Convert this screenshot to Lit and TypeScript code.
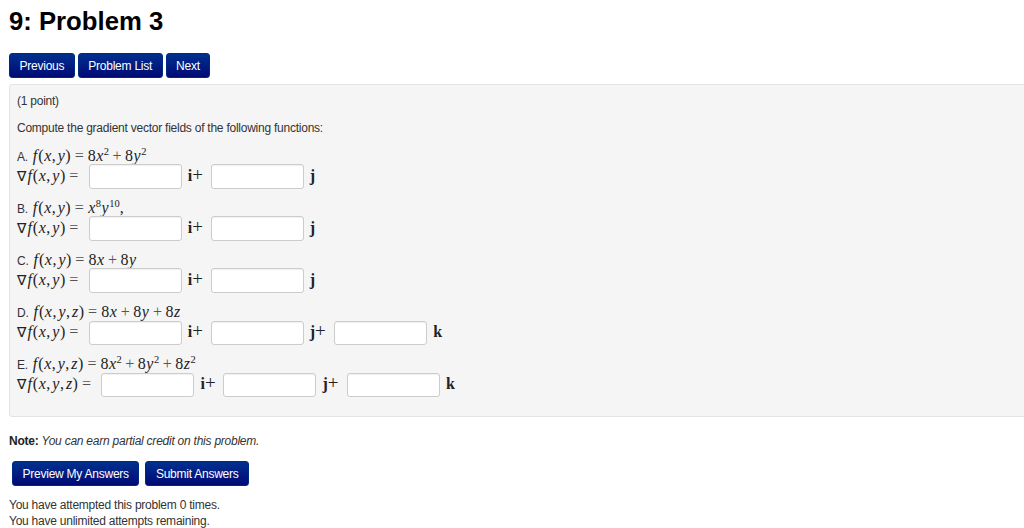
import { LitElement, html, css } from "lit";
import { customElement } from "lit/decorators.js";

const v = (s: string) => html`<i class="var">${s}</i>`;
const sep = html`<span class="comma">,</span>`;
const fxy = html`<i class="fn">f</i>(${v("x")}${sep}${v("y")})`;
const fxyz = html`<i class="fn">f</i>(${v("x")}${sep}${v("y")}${sep}${v("z")})`;
const sup = (s: string) => html`<sup>${s}</sup>`;
const eq = html`<span class="op eq">=</span>`;
const plus = html`<span class="op">+</span>`;

interface Item {
  label: string;
  formula: unknown;
  grad: unknown;
  units: string[];
}

const items: Item[] = [
  { label: "A.", formula: html`${fxy}${eq}8${v("x")}${sup("2")}${plus}8${v("y")}${sup("2")}`, grad: fxy, units: ["i+", "j"] },
  { label: "B.", formula: html`${fxy}${eq}${v("x")}${sup("8")}${v("y")}${sup("10")},`, grad: fxy, units: ["i+", "j"] },
  { label: "C.", formula: html`${fxy}${eq}8${v("x")}${plus}8${v("y")}`, grad: fxy, units: ["i+", "j"] },
  { label: "D.", formula: html`${fxyz}${eq}8${v("x")}${plus}8${v("y")}${plus}8${v("z")}`, grad: fxy, units: ["i+", "j+", "k"] },
  { label: "E.", formula: html`${fxyz}${eq}8${v("x")}${sup("2")}${plus}8${v("y")}${sup("2")}${plus}8${v("z")}${sup("2")}`, grad: fxyz, units: ["i+", "j+", "k"] },
];

@customElement("app-root")
export class AppRoot extends LitElement {
  static styles = css`
    :host {
      display: block;
      width: 1024px;
      height: 528px;
      overflow: hidden;
      background: #fff;
      font-family: "Liberation Sans", Arial, sans-serif;
      font-size: 12px;
      letter-spacing: -0.24px;
      color: #333;
    }
    h2 {
      margin: 0;
      padding: 6px 0 0 9px;
      font-size: 25.7px;
      line-height: 30px;
      font-weight: 700;
      letter-spacing: 0;
      color: #000;
    }
    .nav {
      display: flex;
      gap: 3px;
      margin: 17px 0 0 9px;
    }
    .btn {
      display: block;
      box-sizing: border-box;
      height: 25px;
      padding: 0 9.5px;
      border: 1px solid #002a80;
      border-radius: 3px;
      background: linear-gradient(#00308f, #000a75);
      color: #fff;
      font: 12px/24px "Liberation Sans", Arial, sans-serif;
      letter-spacing: -0.24px;
      white-space: nowrap;
    }
    .well {
      box-sizing: border-box;
      height: 333px;
      width: 1040px;
      margin: 6px 0 0 9px;
      padding: 7px 7px;
      background: #f5f5f5;
      border: 1px solid #e3e3e3;
      border-radius: 3px;
    }
    .well p {
      margin: 0;
      line-height: 18px;
    }
    .well .intro {
      padding-top: 9px;
      height: 38px;
      box-sizing: border-box;
    }
    .problem {
      height: 52px;
    }
    .line {
      height: 16px;
      line-height: 16px;
      white-space: nowrap;
      display: flex;
      align-items: baseline;
      gap: 5px;
    }
    .math {
      font-family: "Liberation Serif", "Times New Roman", serif;
      font-size: 16px;
      letter-spacing: 0;
      color: #222;
    }
    .var {
      padding: 0 0.5px;
    }
    .fn {
      padding-right: 1px;
    }
    .comma {
      margin-right: 1.5px;
    }
    .op {
      margin: 0 3.5px;
      color: #555;
    }
    .eq {
      margin: 0 4px;
    }
    .math sup {
      font-size: 10.5px;
      line-height: 0;
      vertical-align: 6px;
    }
    .answer {
      display: flex;
      align-items: center;
      height: 25px;
    }
    .answer.three {
      align-items: flex-end;
    }
    .answer.three .box {
      height: 24px;
    }
    .answer.three .grad,
    .answer.three .unit {
      align-self: center;
    }
    .grad {
      padding-right: 6.5px;
      padding-bottom: 2px;
    }
    .nabla {
      font-family: "DejaVu Sans", sans-serif;
      font-size: 14px;
      padding-right: 1px;
    }
    .box {
      box-sizing: border-box;
      width: 93px;
      height: 25px;
      background: #fff;
      border: 1px solid #ccc;
      border-radius: 3px;
      box-shadow: inset 0 1px 1px rgba(0, 0, 0, 0.06);
      padding: 0;
      margin: 0;
    }
    .unit {
      box-sizing: border-box;
      width: 29px;
      padding-left: 6px;
      padding-bottom: 2px;
      font-family: "Liberation Serif", "Times New Roman", serif;
      font-size: 16px;
      font-weight: 700;
      letter-spacing: 0;
      color: #222;
    }
    .unit.wide {
      width: 30.5px;
    }
    .unit span {
      font-weight: 400;
      font-size: 19px;
      line-height: 0;
    }
    .note {
      margin: 15px 0 0 9px;
      line-height: 18px;
    }
    .note b {
      color: #222;
    }
    .submit {
      display: flex;
      gap: 6px;
      margin: 11px 0 0 12px;
    }
    .status {
      margin: 11px 0 0 9px;
      line-height: 16px;
    }
    .status div {
      white-space: nowrap;
    }
  `;

  private unit(u: string, i: number) {
    const p = u.endsWith("+");
    return html`<div class="unit ${i === 1 ? "wide" : ""}">${p ? u[0] : u}${p ? html`<span>+</span>` : ""}</div>`;
  }

  render() {
    return html`
      <h2>9: Problem 3</h2>
      <div class="nav">
        <div class="btn">Previous</div>
        <div class="btn">Problem List</div>
        <div class="btn">Next</div>
      </div>
      <div class="well">
        <p>(1 point)</p>
        <p class="intro">Compute the gradient vector fields of the following functions:</p>
        ${items.map(
          (it) => html`
            <div class="problem">
              <div class="line">
                <span>${it.label}</span><span class="math">${it.formula}</span>
              </div>
              <div class="answer ${it.units.length === 3 ? "three" : ""}">
                <span class="math grad"><span class="nabla">∇</span>${it.grad}${eq}</span>
                ${it.units.map(
                  (u, i) => html`<input class="box" type="text" aria-label="answer" />${this.unit(u, i)}`
                )}
              </div>
            </div>
          `
        )}
      </div>
      <div class="note"><b>Note:</b> <i>You can earn partial credit on this problem.</i></div>
      <div class="submit">
        <div class="btn">Preview My Answers</div>
        <div class="btn">Submit Answers</div>
      </div>
      <div class="status">
        <div>You have attempted this problem 0 times.</div>
        <div>You have unlimited attempts remaining.</div>
      </div>
    `;
  }
}
